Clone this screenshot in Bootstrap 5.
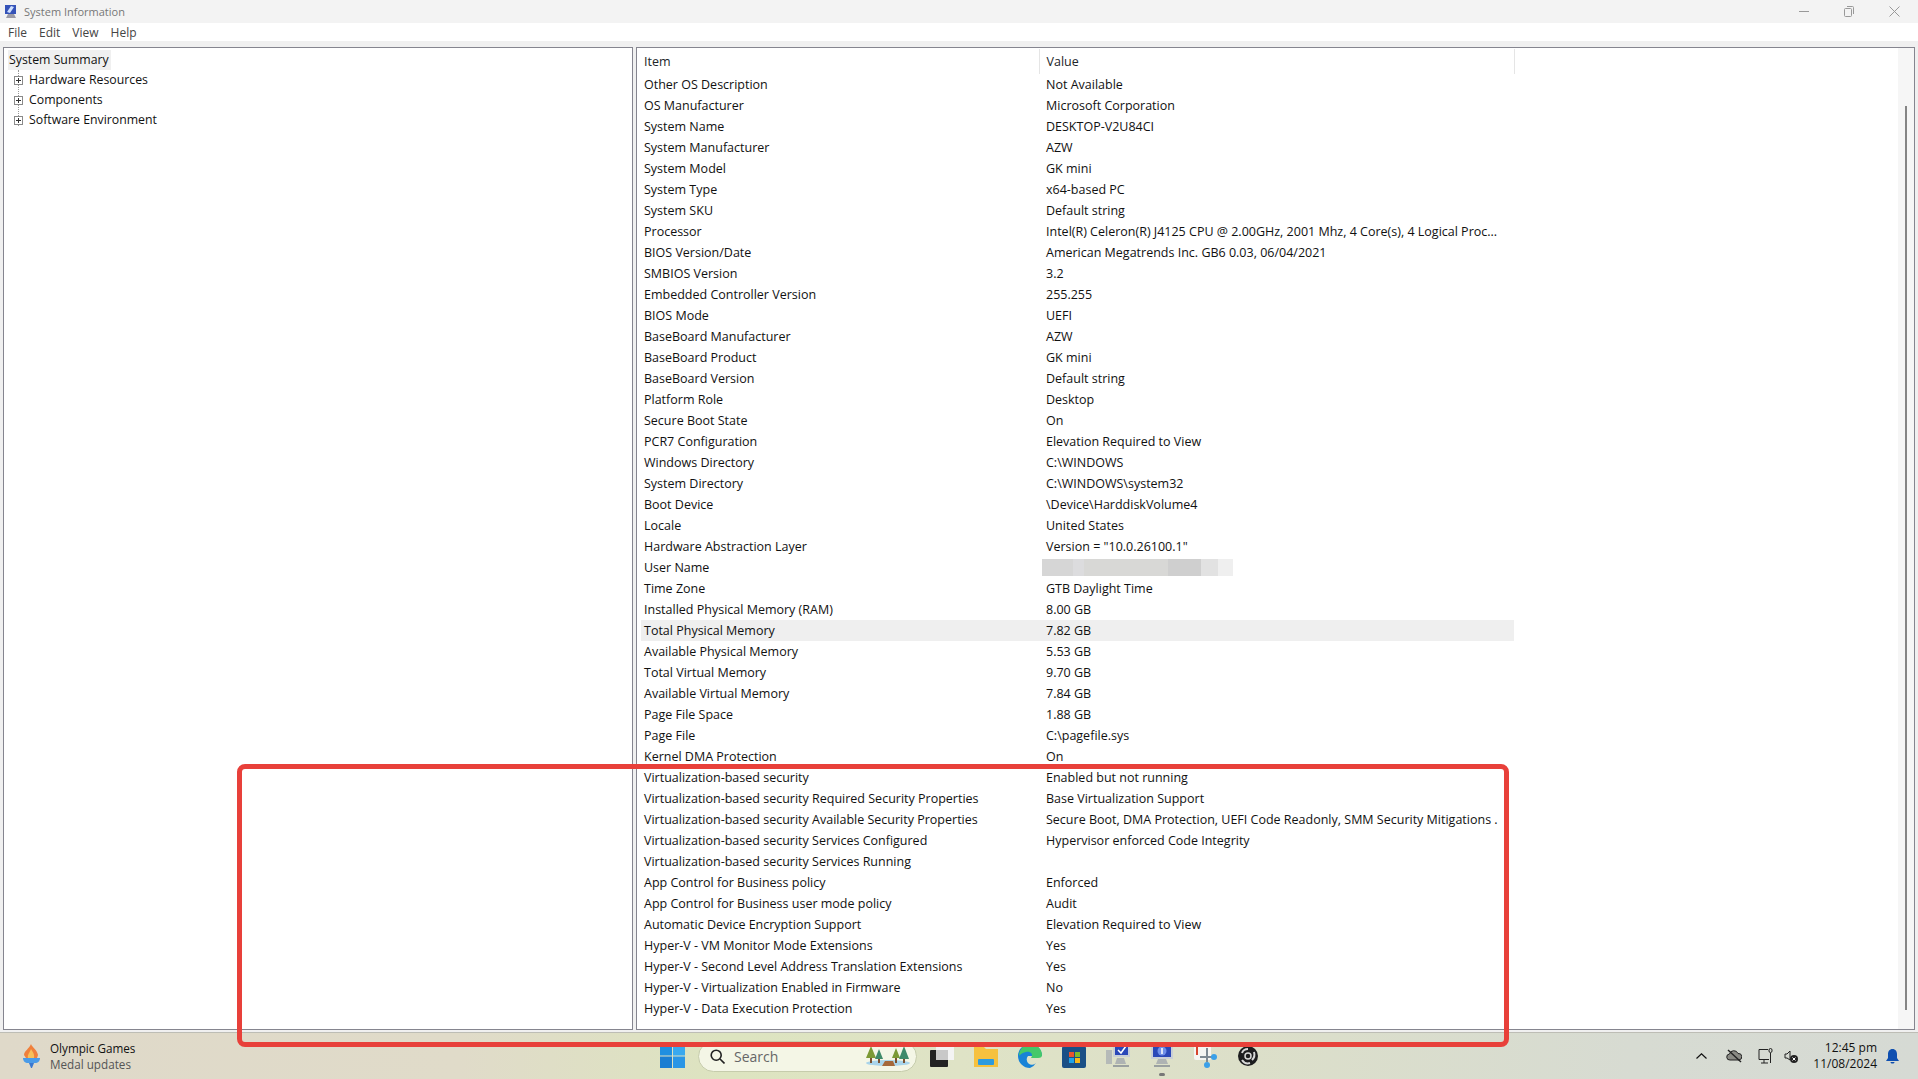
<!DOCTYPE html>
<html lang="en">
<head>
  <meta charset="UTF-8">
  <title>System Information</title>
  <link href="https://cdn.jsdelivr.net/npm/bootstrap@5.3.2/dist/css/bootstrap.min.css" rel="stylesheet">
  <style>
    html, body { height: 100%; overflow: hidden; }
    body { font-family: "Open Sans", "Liberation Sans", sans-serif; font-size: 12px; color: #111; background: #f0f0f0; }
    .win { height: 1079px; position: relative; }
    .title-bar { height: 23px; background: #f3f3f3; color: #777; padding-left: 3px; font-size: 11px; }
    .title-bar .win-name { margin-left: 5px; padding-top: 1px; }
    .win-ctrls { margin-left: auto; padding-right: 18px; gap: 34px; }
    .menu-bar { height: 18px; background: #fff; padding: 2px 0 0 8px; color: #444; gap: 12px; }
    .panes { height: 983px; margin-top: 6px; padding: 0 3px; gap: 3px; }
    .pane { background: #fff; border: 1px solid #85858f; }
    .tree-pane { width: 630px; padding: 2px 4px; position: relative; font-size: 12.3px; }
    .tree-root { display: inline-block; height: 20px; line-height: 20px; padding: 0 1px; background: #f0f0f0; width: 103px; white-space: nowrap; }
    .tree-row { height: 20px; line-height: 20px; padding-left: 6px; gap: 6px; }
    .tree-box { width: 9px; height: 9px; border: 1px solid #8a8a8a; position: relative; flex: none; background: #fff; }
    .tree-box::before { content: ""; position: absolute; left: 1px; right: 1px; top: 3px; height: 1px; background: #333; }
    .tree-box::after { content: ""; position: absolute; top: 1px; bottom: 1px; left: 3px; width: 1px; background: #333; }
    .tree-line { position: absolute; left: 14px; top: 22px; height: 56px; border-left: 1px dotted #999; }
    .list-pane { flex: 1; position: relative; padding: 1px 0 0 4px; }
    .info-table { table-layout: fixed; width: 873px; margin: 0; font-size: 12.5px; --bs-table-bg: transparent; }
    .info-table th { font-weight: 400; height: 25px; padding: 1px 0 0 3px; border-right: 1px solid #e5e5e5; vertical-align: middle; }
    .info-table th + th { padding-left: 7px; }
    .info-table td { height: 21px; padding: 2px 0 0 3px; vertical-align: middle; white-space: nowrap; overflow: hidden; color: #111; }
    .info-table td + td { padding-left: 7px; }
    .info-table tr.picked td { background: #efefef; }
    .blur-name { display: block; width: 191px; height: 17px; margin: -2px 0 0 -4px;
      background: linear-gradient(90deg, #d6d6d6 0 16%, #dcdcde 16% 22%, #d8d8d6 22% 66%, #cfcfcf 66% 83%, #e2e2e2 83% 92%, #efefef 92% 100%); }
    .v-scroll { position: absolute; top: 0; right: 0; bottom: 0; width: 16px; background: #f6f6f6; }
    .v-thumb { position: absolute; left: 7px; top: 58px; width: 2px; height: 904px; background: #858585; }
    .task-bar { height: 47px; margin-top: 2px; border-top: 1px solid #bdbdb5;
      background: linear-gradient(90deg, #dfd9c9 0, #e0dbc9 24%, #dde4c0 38%, #dfe3c6 50%, #dcdfc9 65%, #d7dbd2 85%, #d6dad4 100%); }
    .news-box { width: 660px; padding-left: 23px; gap: 10px; line-height: 16px; flex: none; font-size: 11.7px; }
    .news-sub { color: #555; }
    .dock { gap: 20px; }
    .dock svg { display: block; flex: none; }
    .search-pill { width: 219px; height: 31px; margin: 0 -7px; background: #f4f6e6; border: 1px solid #c6ccac; border-radius: 16px;
      padding: 0 5px 0 11px; color: #666; font-size: 14px; }
    .search-pill span { margin-left: 9px; }
    .search-pill svg:last-child { margin-left: auto; }
    .run-dot { position: relative; }
    .run-dot::after { content: ""; position: absolute; left: 9px; bottom: -8px; width: 6px; height: 3px; border-radius: 2px; background: #777; }
    .tray { margin-left: auto; padding-right: 19px; }
    .tray-cloud { margin-left: 19px; }
    .tray-net { margin-left: 16px; }
    .tray-vol { margin-left: 11px; }
    .clock { text-align: right; line-height: 16px; margin-left: 8px; margin-right: 9px; width: 71px; }
    .mark-box { position: absolute; left: 237px; top: 764px; width: 1272px; height: 283px; border: 5px solid #e8403a; border-radius: 8px; pointer-events: none; }
  </style>
</head>
<body>
<div class="win d-flex flex-column">

  <!-- Title bar -->
  <div class="title-bar d-flex align-items-center">
    <svg width="16" height="16" viewBox="0 0 16 16"><rect x="2" y="1" width="11" height="9" fill="#3553b8"/><path d="M4 8l4-6 3 1-4 6z" fill="#cfe0ff"/><path d="M5 10h6l2 4H3z" fill="#9a9aa6"/></svg>
    <span class="win-name">System Information</span>
    <div class="win-ctrls d-flex align-items-center">
      <svg width="11" height="11" viewBox="0 0 11 11"><path d="M0 5.500h10" stroke="#999" fill="none"/></svg>
      <svg width="11" height="11" viewBox="0 0 11 11"><rect x=".5" y="2.500" width="7" height="8" rx="1" stroke="#999" fill="none"/><path d="M3 .5h5.500a1 1 0 0 1 1 1V8" stroke="#999" fill="none"/></svg>
      <svg width="11" height="11" viewBox="0 0 11 11"><path d="M.5.5l10 10M10.500.5l-10 10" stroke="#999" fill="none"/></svg>
    </div>
  </div>

  <!-- Menu -->
  <div class="menu-bar d-flex align-items-center">
    <span>File</span><span>Edit</span><span>View</span><span>Help</span>
  </div>

  <!-- Panes -->
  <div class="panes d-flex">
    <div class="pane tree-pane">
      <div class="tree-line"></div>
      <div class="tree-root">System Summary</div>
      <div class="tree-row d-flex align-items-center"><i class="tree-box"></i>Hardware Resources</div>
      <div class="tree-row d-flex align-items-center"><i class="tree-box"></i>Components</div>
      <div class="tree-row d-flex align-items-center"><i class="tree-box"></i>Software Environment</div>
    </div>
    <div class="pane list-pane">
      <table class="table table-borderless info-table">
        <colgroup><col style="width:398px"><col style="width:475px"></colgroup>
        <thead><tr><th>Item</th><th>Value</th></tr></thead>
        <tbody id="info-rows"></tbody>
      </table>
      <div class="v-scroll"><div class="v-thumb"></div></div>
    </div>
  </div>

  <!-- Taskbar -->
  <div class="task-bar d-flex align-items-center">
    <div class="news-box d-flex align-items-center">
      <svg width="17" height="24" viewBox="0 0 17 24"><path d="M8 0c1 3 6 6 7 11l-1 3H3l-2-3C1 7 6 5 8 0z" fill="#f0803c"/><path d="M8 5c1 2 4 5 3 9H5C4 11 7 8 8 5z" fill="#f8c05a"/><path d="M0 14h17c0 3-2 5-5 5H5c-3 0-5-2-5-5z" fill="#4a9be8"/><path d="M6 19h5l-2 5H8z" fill="#3a78d0"/></svg>
      <div><div>Olympic Games</div><div class="news-sub">Medal updates</div></div>
    </div>
    <div class="dock d-flex align-items-center">
      <svg width="25" height="24" viewBox="0 0 25 24"><path d="M0 0h12v11.500H0z" fill="#1f8fe0"/><path d="M13 0h12v11.500H13z" fill="#39a9ef"/><path d="M0 12.500h12V24H0z" fill="#1a7ed2"/><path d="M13 12.500h12V24H13z" fill="#2a96e6"/></svg>
      <div class="search-pill d-flex align-items-center">
        <svg width="15" height="15" viewBox="0 0 15 15"><circle cx="6.200" cy="6.200" r="5" stroke="#222" stroke-width="1.600" fill="none"/><path d="M10 10l4.500 4.500" stroke="#222" stroke-width="1.600"/></svg>
        <span>Search</span>
        <svg width="46" height="22" viewBox="0 0 46 22"><ellipse cx="23" cy="18" rx="22" ry="3" fill="#a9d4ea"/><path d="M17 21l3-5h8l2 5z" fill="#a5683a"/><path d="M6 1l5 12H1z" fill="#7c9a35"/><path d="M14 4l4 10h-8z" fill="#3f8a6a"/><path d="M31 3l4 10h-8z" fill="#7c9a35"/><path d="M39 1l5 13H34z" fill="#3f8a6a"/><path d="M5 13h2v5H5zM13 14h2v4h-2zM30 13h2v5h-2zM38 14h2v4h-2z" fill="#7a5230"/></svg>
      </div>
      <svg width="24" height="21" viewBox="0 0 24 21"><rect x="6" y="0" width="18" height="14" fill="#f4f4f4"/><rect x="0" y="4" width="18" height="17" rx="1" fill="#222"/><rect x="6" y="4" width="12" height="10" fill="#c8c8c8"/></svg>
      <svg width="24" height="22" viewBox="0 0 24 22"><path d="M0 1h9l3 3h12v18H0z" fill="#f6c13e"/><rect x="4" y="14" width="16" height="6" rx="1" fill="#2c9be0"/></svg>
      <svg width="24" height="24" viewBox="0 0 24 24"><path d="M12 0a12 12 0 0 1 12 12H10a5 5 0 0 0 8 7 11 11 0 0 1-6 5A12 12 0 0 1 12 0z" fill="#1883d7"/><path d="M12 0c7 0 12 5 12 11 0 2-1 3-4 3h-7c3-4-1-7-5-6C3 9 1 12 1 12 1 5 6 0 12 0z" fill="#45c86a"/></svg>
      <svg width="24" height="24" viewBox="0 0 24 24"><path d="M7 3V0M17 3V0" stroke="#1b6ec2" stroke-width="1.500"/><rect x="0" y="2" width="24" height="22" rx="2" fill="#1a4f86"/><rect x="7" y="8" width="5" height="5" fill="#e8532e"/><rect x="13" y="8" width="5" height="5" fill="#7fba2a"/><rect x="7" y="14" width="5" height="5" fill="#1fa3e8"/><rect x="13" y="14" width="5" height="5" fill="#f8b71c"/></svg>
      <svg width="24" height="24" viewBox="0 0 24 24"><path d="M7 0h17v13H7z" fill="#c9cfd6"/><path d="M9 1h13v10H9z" fill="#2a48b8"/><path d="M12 6l3 3 5-7" stroke="#fff" stroke-width="1.500" fill="none"/><path d="M0 6h6v14H0z" fill="#b5bab8"/><path d="M11 14h7l2 6H9z" fill="#aeb3b3"/><path d="M7 21h16v2H7z" fill="#9aa0a0"/></svg>
      <span class="run-dot"><svg width="24" height="24" viewBox="0 0 24 24"><path d="M1 0h22v15H1z" fill="#c9cfd6"/><path d="M3 1h18v12H3z" fill="#2a48b8"/><circle cx="12" cy="7" r="4.500" fill="#6f8fe8"/><path d="M12 4v6" stroke="#fff" stroke-width="1.500"/><path d="M8 15h8l2 5H6z" fill="#aeb3b3"/><path d="M4 21h16v2H4z" fill="#9aa0a0"/></svg></span>
      <svg width="24" height="24" viewBox="0 0 24 24"><rect x="0" y="0" width="17" height="16" rx="2" fill="#f5f5f3"/><path d="M2 1h11v2H4v8H2z" fill="#d6452e"/><path d="M13 4v14M6 13h15" stroke="#7f8a94" stroke-width="2"/><circle cx="20" cy="13" r="3" fill="#3aa0e8"/><circle cx="13" cy="21" r="3" fill="#3aa0e8"/></svg>
      <svg width="20" height="20" viewBox="0 0 20 20"><circle cx="10" cy="10" r="10" fill="#1d1d1f"/><circle cx="10" cy="10" r="3" fill="#1d1d1f" stroke="#d8d8d8" stroke-width="1.500"/><path d="M4 7c1-3 4-4 6-4M16 6c1 3 0 6-2 8M12 17c-3 1-6 0-8-3" stroke="#d8d8d8" stroke-width="2" fill="none"/></svg>
    </div>
    <div class="tray d-flex align-items-center">
      <svg width="11" height="6" viewBox="0 0 11 6"><path d="M.5 5.500L5.500 .8l5 4.700" stroke="#111" stroke-width="1.200" fill="none"/></svg>
      <svg class="tray-cloud" width="16" height="14" viewBox="0 0 16 14"><path d="M4 11a3 3 0 0 1-.500-6 4.500 4.500 0 0 1 8.500-.500 3.200 3.200 0 0 1 1 6.500z" stroke="#222" fill="#8a8a84"/><path d="M2 1l13 12" stroke="#222" stroke-width="1.400"/></svg>
      <svg class="tray-net" width="15" height="16" viewBox="0 0 15 16"><path d="M10 1.500H1v10h10M6 12v3M3 15h7" stroke="#222" fill="none"/><rect x="11" y=".5" width="3" height="4" rx="1.500" stroke="#222" fill="none"/><path d="M12.500 5v10" stroke="#222"/></svg>
      <svg class="tray-vol" width="14" height="14" viewBox="0 0 14 14"><path d="M1 5h2l3-3v9L3 9H1z" stroke="#222" fill="none"/><circle cx="10" cy="10" r="4" fill="#222"/><path d="M8.500 8.500l3 3m0-3l-3 3" stroke="#fff"/></svg>
      <div class="clock"><div>12:45 pm</div><div>11/08/2024</div></div>
      <svg width="13" height="15" viewBox="0 0 13 15"><path d="M6.500 0C9.500 0 11 2.500 11 5v4l2 3H0l2-3V5c0-2.500 1.500-5 4.500-5zM4.500 13h4c0 2-4 2-4 0z" fill="#0f4fb0"/></svg>
    </div>
  </div>

  <!-- Red marker drawn on top of the screenshot -->
  <div class="mark-box"></div>
</div>

<script>
  const rows = [
    ["Other OS Description", "Not Available"],
    ["OS Manufacturer", "Microsoft Corporation"],
    ["System Name", "DESKTOP-V2U84CI"],
    ["System Manufacturer", "AZW"],
    ["System Model", "GK mini"],
    ["System Type", "x64-based PC"],
    ["System SKU", "Default string"],
    ["Processor", "Intel(R) Celeron(R) J4125 CPU @ 2.00GHz, 2001 Mhz, 4 Core(s), 4 Logical Proc..."],
    ["BIOS Version/Date", "American Megatrends Inc. GB6 0.03, 06/04/2021"],
    ["SMBIOS Version", "3.2"],
    ["Embedded Controller Version", "255.255"],
    ["BIOS Mode", "UEFI"],
    ["BaseBoard Manufacturer", "AZW"],
    ["BaseBoard Product", "GK mini"],
    ["BaseBoard Version", "Default string"],
    ["Platform Role", "Desktop"],
    ["Secure Boot State", "On"],
    ["PCR7 Configuration", "Elevation Required to View"],
    ["Windows Directory", "C:\\WINDOWS"],
    ["System Directory", "C:\\WINDOWS\\system32"],
    ["Boot Device", "\\Device\\HarddiskVolume4"],
    ["Locale", "United States"],
    ["Hardware Abstraction Layer", 'Version = "10.0.26100.1"'],
    ["User Name", '<span class="blur-name"></span>'],
    ["Time Zone", "GTB Daylight Time"],
    ["Installed Physical Memory (RAM)", "8.00 GB"],
    ["Total Physical Memory", "7.82 GB"],
    ["Available Physical Memory", "5.53 GB"],
    ["Total Virtual Memory", "9.70 GB"],
    ["Available Virtual Memory", "7.84 GB"],
    ["Page File Space", "1.88 GB"],
    ["Page File", "C:\\pagefile.sys"],
    ["Kernel DMA Protection", "On"],
    ["Virtualization-based security", "Enabled but not running"],
    ["Virtualization-based security Required Security Properties", "Base Virtualization Support"],
    ["Virtualization-based security Available Security Properties", "Secure Boot, DMA Protection, UEFI Code Readonly, SMM Security Mitigations ."],
    ["Virtualization-based security Services Configured", "Hypervisor enforced Code Integrity"],
    ["Virtualization-based security Services Running", ""],
    ["App Control for Business policy", "Enforced"],
    ["App Control for Business user mode policy", "Audit"],
    ["Automatic Device Encryption Support", "Elevation Required to View"],
    ["Hyper-V - VM Monitor Mode Extensions", "Yes"],
    ["Hyper-V - Second Level Address Translation Extensions", "Yes"],
    ["Hyper-V - Virtualization Enabled in Firmware", "No"],
    ["Hyper-V - Data Execution Protection", "Yes"]
  ];
  document.getElementById("info-rows").innerHTML = rows.map(r =>
    `<tr class="${r[0] === "Total Physical Memory" ? "picked" : ""}"><td>${r[0]}</td><td>${r[1]}</td></tr>`
  ).join("");
</script>
<script src="https://cdn.jsdelivr.net/npm/bootstrap@5.3.2/dist/js/bootstrap.bundle.min.js"></script>
</body>
</html>
